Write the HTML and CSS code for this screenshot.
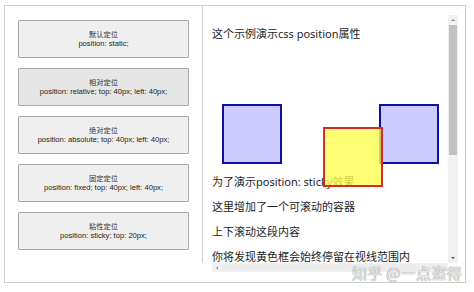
FILE: index.html
```html
<!DOCTYPE html>
<html lang="zh">
<head>
<meta charset="utf-8">
<link rel="stylesheet" href="styles.css">
</head>
<body>
<div class="frame">
  <div class="left">
    <div class="btn"><span class="zh">默认定位</span><span>position: static;</span></div>
    <div class="btn btn-active"><span class="zh">相对定位</span><span>position: relative; top: 40px; left: 40px;</span></div>
    <div class="btn"><span class="zh">绝对定位</span><span>position: absolute; top: 40px; left: 40px;</span></div>
    <div class="btn"><span class="zh">固定定位</span><span>position: fixed; top: 40px; left: 40px;</span></div>
    <div class="btn"><span class="zh">粘性定位</span><span>position: sticky; top: 20px;</span></div>
  </div>
  <div class="right">
    <div class="scroller">
      <div class="viewport">
        <p class="title">这个示例演示css position属性</p>
        <div class="boxes">
          <div class="box"></div>
          <div class="box box-second"></div>
          <div class="sticky"></div>
        </div>
        <p class="line first">为了演示position: sticky效果</p>
        <p class="line">这里增加了一个可滚动的容器</p>
        <p class="line">上下滚动这段内容</p>
        <p class="line">你将发现黄色框会始终停留在视线范围内</p>
      </div>
      <div class="vbar">
        <span class="arrow-box"><span class="arrow up"></span></span>
        <span class="thumb"></span>
        <span class="track"></span>
        <span class="arrow-box"><span class="arrow down"></span></span>
      </div>
      <div class="hbar">
        <span class="arrow-box h"><span class="arrow leftarrow"></span></span>
        <span class="hthumb"></span>
      </div>
      <div class="corner"></div>
    </div>
  </div>
  <div class="watermark">知乎 @一点盗得</div>
</div>
</body>
</html>
```

FILE: styles.css
```css
* { box-sizing: border-box; }
html, body { margin: 0; padding: 0; background: #fff; }

.frame {
  position: relative;
  margin: 5px 0 0 4px;
  width: 462px;
  height: 278px;
  border: 1px solid #cdcdcd;
  display: flex;
  align-items: flex-start;
}

.left {
  width: 198px;
  height: 257px;
  border-right: 1px solid #cfcfcf;
  padding: 14px 13px 0 13px;
  display: flex;
  flex-direction: column;
  gap: 10px;
}

.btn {
  height: 38px;
  background: #efefef;
  border: 1px solid #a9a9a9;
  border-radius: 1px;
  display: flex;
  flex-direction: column;
  align-items: center;
  justify-content: center;
  font-family: "Liberation Sans", "Noto Sans CJK SC", sans-serif;
  font-size: 7.6px;
  line-height: 9px;
  color: #222;
}
.btn .zh { font-size: 7.2px; color: #333; }
.btn-active { background: #e6e6e6; }

.right {
  flex: 1;
  padding: 9px 7px 0 9px;
}

.scroller {
  height: 257px;
  display: grid;
  grid-template-columns: 1fr 10px;
  grid-template-rows: 1fr 9px;
}

.viewport {
  overflow: hidden;
  position: relative;
  font-family: "Noto Sans", "Noto Sans CJK SC", sans-serif;
  font-size: 11px;
  line-height: 16px;
  color: #1e1e1e;
}

.title { margin: 11px 0 0 0; white-space: nowrap; }

.boxes {
  position: relative;
  margin-top: 62px;
  display: flex;
  padding-left: 10px;
}
.box {
  width: 60px;
  height: 60px;
  background: #ccccff;
  border: 2px solid #1010a0;
}
.box-second { margin-left: 97px; }
.sticky {
  position: absolute;
  left: 111px;
  top: 23px;
  width: 60px;
  height: 60px;
  background: rgba(255, 255, 80, 0.78);
  border: 2px solid #d92a2a;
  z-index: 2;
}

.line { margin: 9px 0 0 0; white-space: nowrap; }
.line.first { margin-top: 10px; }

.vbar {
  background: #f1f1f1;
  display: flex;
  flex-direction: column;
}
.arrow-box {
  height: 10px;
  flex: none;
  display: flex;
  align-items: center;
  justify-content: center;
}
.arrow-box.h { width: 9px; height: 9px; }
.thumb {
  height: 130px;
  background: #c1c1c1;
  margin: 0 1px;
  flex: none;
}
.track { flex: 1; }
.arrow { width: 0; height: 0; }
.arrow.up {
  border-left: 2px solid transparent;
  border-right: 2px solid transparent;
  border-bottom: 2px solid #8a8a8a;
}
.arrow.down {
  border-left: 2px solid transparent;
  border-right: 2px solid transparent;
  border-top: 2px solid #505050;
}
.arrow.leftarrow {
  border-top: 2px solid transparent;
  border-bottom: 2px solid transparent;
  border-right: 2px solid #9a9a9a;
}

.hbar {
  background: #f1f1f1;
  display: flex;
  align-items: stretch;
}
.hthumb {
  flex: 1;
  margin: 1px 2px;
  background: #ececec;
}
.corner { background: #fff; }

.watermark {
  position: absolute;
  right: 3px;
  bottom: 1px;
  font-family: "Noto Sans CJK SC", sans-serif;
  font-size: 15px;
  line-height: 17px;
  color: rgba(238, 238, 238, 0.92);
  text-shadow: 0 0 1px #9a9a9a, 0 0 1px #9a9a9a;
  letter-spacing: 0.3px;
  white-space: nowrap;
}
```
